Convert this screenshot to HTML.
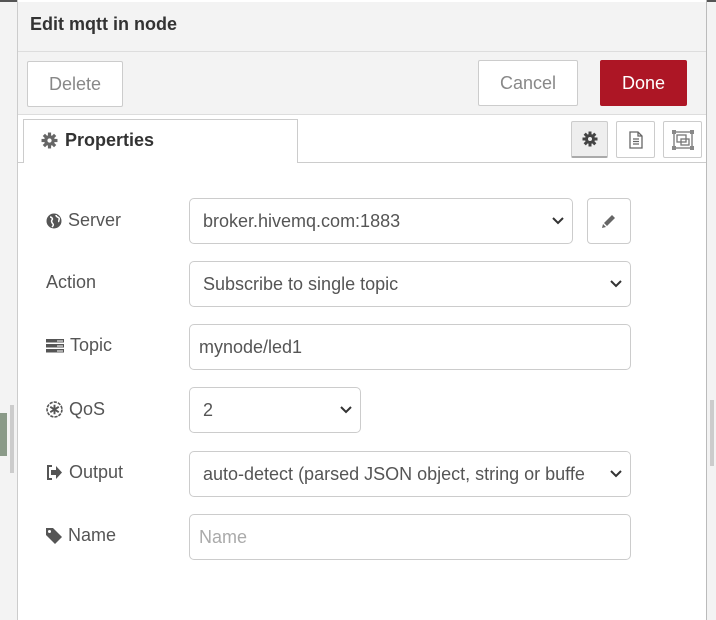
<!DOCTYPE html>
<html><head><style>
*{box-sizing:border-box;margin:0;padding:0}
body{width:716px;height:620px;overflow:hidden;background:#f3f3f3;font-family:"Liberation Sans",sans-serif;color:#555;position:relative}
.abs{position:absolute}
.dlg{left:17px;top:0;width:690px;height:620px;background:#fff;border-left:1px solid #ccc;border-right:1px solid #bbb}
.btn{position:absolute;background:#fff;border:1px solid #ccc;border-radius:2px;font-size:18px;color:#888;display:flex;align-items:center;justify-content:center}
.lbl{position:absolute;left:46px;font-size:18px;color:#555;display:flex;align-items:center;gap:6px}
.inp{position:absolute;left:189px;border:1px solid #ccc;border-radius:5px;height:46px;font-size:18px;color:#555;padding-left:13px;display:flex;align-items:center;background:#fff;white-space:nowrap;overflow:hidden}
.chev{position:absolute;right:8px;top:18px}
</style></head><body>
<div class="abs" style="left:0;top:0;width:716px;height:2px;background:#555"></div>
<div class="abs" style="left:10px;top:405px;width:4px;height:68px;background:#ccc"></div>
<div class="abs" style="left:0;top:413px;width:7px;height:43px;background:#8a9a88"></div>
<div class="abs" style="left:710px;top:400px;width:4px;height:66px;background:#ccc"></div>
<div class="abs dlg">
 <div class="abs" style="left:0;top:2px;width:688px;height:50px;background:#f3f3f3;border-bottom:1px solid #ddd"></div>
 <div class="abs" style="left:12px;top:14px;font-size:18px;font-weight:bold;color:#333">Edit mqtt in node</div>
 <div class="abs" style="left:0;top:52px;width:688px;height:63px;background:#f3f3f3;border-bottom:1px solid #ddd"></div>
</div>
<div class="btn" style="left:27px;top:61px;width:96px;height:46px">Delete</div>
<div class="btn" style="left:478px;top:60px;width:100px;height:46px">Cancel</div>
<div class="btn" style="left:600px;top:60px;width:87px;height:46px;background:#ad1625;border-color:#ad1625;color:#fff">Done</div>
<div class="abs" style="left:18px;top:162px;width:688px;height:1px;background:#ccc"></div>
<div class="abs" style="left:23px;top:119px;width:275px;height:44px;background:#fff;border:1px solid #ccc;border-bottom:none;font-size:18px;font-weight:bold;color:#333;padding:10px 0 0 17px;display:flex;gap:7px">
<svg width="17" height="17" viewBox="0 0 16 16" style="margin-top:2px"><g fill="#666"><circle cx="8" cy="8" r="5"/><rect x="6.5" y="0.5" width="3" height="15"/><rect x="0.5" y="6.5" width="15" height="3"/><rect x="6.5" y="0.5" width="3" height="15" transform="rotate(45 8 8)"/><rect x="6.5" y="0.5" width="3" height="15" transform="rotate(-45 8 8)"/></g><circle cx="8" cy="8" r="2" fill="#fff"/></svg>Properties</div>
<div class="btn" style="left:571px;top:121px;width:37px;height:37px;background:#eee;border-bottom:2px solid #aaa"><svg width="16" height="16" viewBox="0 0 16 16"><g fill="#444"><circle cx="8" cy="8" r="5"/><rect x="6.5" y="0.5" width="3" height="15"/><rect x="0.5" y="6.5" width="15" height="3"/><rect x="6.5" y="0.5" width="3" height="15" transform="rotate(45 8 8)"/><rect x="6.5" y="0.5" width="3" height="15" transform="rotate(-45 8 8)"/></g><circle cx="8" cy="8" r="2" fill="#eee"/></svg></div>
<div class="btn" style="left:616px;top:121px;width:39px;height:37px"><svg width="16" height="18" viewBox="0 0 16 18"><path d="M2 1h8l4 4v12H2z M10 1v4h4" fill="none" stroke="#666" stroke-width="1.3"/><path d="M5 8h6M5 10.5h6M5 13h6" stroke="#666" stroke-width="1.2"/></svg></div>
<div class="btn" style="left:663px;top:121px;width:39px;height:37px"><svg width="22" height="20" viewBox="0 0 22 20"><rect x="2" y="2" width="18" height="16" fill="none" stroke="#777" stroke-width="1.3"/><rect x="5" y="5" width="9" height="7" fill="none" stroke="#777" stroke-width="1.3"/><rect x="9" y="9" width="8" height="6" fill="none" stroke="#777" stroke-width="1.3"/><g fill="#888"><rect x="0" y="0" width="4" height="4"/><rect x="18" y="0" width="4" height="4"/><rect x="0" y="16" width="4" height="4"/><rect x="18" y="16" width="4" height="4"/></g></svg></div>

<div class="lbl" style="top:210px"><svg width="16" height="16" viewBox="0 0 16 16"><circle cx="8" cy="8" r="7.5" fill="#555"/><path d="M4 4c2 0 3 2 2 3s0 3 1 4-1 3-1 3M10 2c0 2 2 2 3 3s-1 3 0 4" stroke="#fff" stroke-width="1.5" fill="none"/></svg>Server</div>
<div class="inp" style="top:198px;width:384px">broker.hivemq.com:1883<svg class="chev" width="12" height="8"><path d="M1 1l5 5 5-5" stroke="#333" stroke-width="2" fill="none"/></svg></div>
<div class="btn" style="left:587px;top:198px;width:44px;height:46px;border-radius:4px"><svg width="16" height="16" viewBox="0 0 16 16"><path d="M3 10L11 2l3 3-8 8z" fill="#666"/><path d="M2 11l3 3-4 1z" fill="#666"/></svg></div>

<div class="lbl" style="top:272px">Action</div>
<div class="inp" style="top:261px;width:442px">Subscribe to single topic<svg class="chev" width="12" height="8"><path d="M1 1l5 5 5-5" stroke="#333" stroke-width="2" fill="none"/></svg></div>

<div class="lbl" style="top:335px"><svg width="18" height="14" viewBox="0 0 18 14"><g fill="#555"><rect y="0" width="18" height="3.5"/><rect y="5" width="18" height="3.5"/><rect y="10" width="18" height="3.5"/></g><g fill="#fff"><rect x="11" y="1.5" width="6" height="1"/><rect x="11" y="6.5" width="6" height="1"/><rect x="11" y="11.5" width="6" height="1"/></g></svg>Topic</div>
<div class="inp" style="top:324px;width:442px;padding-left:9px">mynode/led1</div>

<div class="lbl" style="top:399px"><svg width="17" height="17" viewBox="0 0 16 16"><circle cx="8" cy="8" r="7" fill="none" stroke="#555" stroke-width="1.5" stroke-dasharray="3 1"/><path d="M8 3.5v9M4 5.5l8 5M12 5.5l-8 5" stroke="#555" stroke-width="1.8"/></svg>QoS</div>
<div class="inp" style="top:387px;width:172px">2<svg class="chev" width="12" height="8"><path d="M1 1l5 5 5-5" stroke="#333" stroke-width="2" fill="none"/></svg></div>

<div class="lbl" style="top:462px"><svg width="17" height="15" viewBox="0 0 17 15"><path d="M6 1H2v13h4" stroke="#555" stroke-width="2" fill="none"/><path d="M5 5h5V1l6 6.5-6 6.5V10H5z" fill="#555"/></svg>Output</div>
<div class="inp" style="top:451px;width:442px">auto-detect (parsed JSON object, string or buffe<span style="position:absolute;right:0;top:0;width:36px;height:44px;background:#fff"></span><svg class="chev" width="12" height="8"><path d="M1 1l5 5 5-5" stroke="#333" stroke-width="2" fill="none"/></svg></div>

<div class="lbl" style="top:525px"><svg width="16" height="16" viewBox="0 0 16 16"><path d="M0 0h7l9 9-7 7-9-9z" fill="#555"/><circle cx="3.5" cy="3.5" r="1.5" fill="#fff"/></svg>Name</div>
<div class="inp" style="top:514px;width:442px;color:#aaa;padding-left:9px">Name</div>
</body></html>
